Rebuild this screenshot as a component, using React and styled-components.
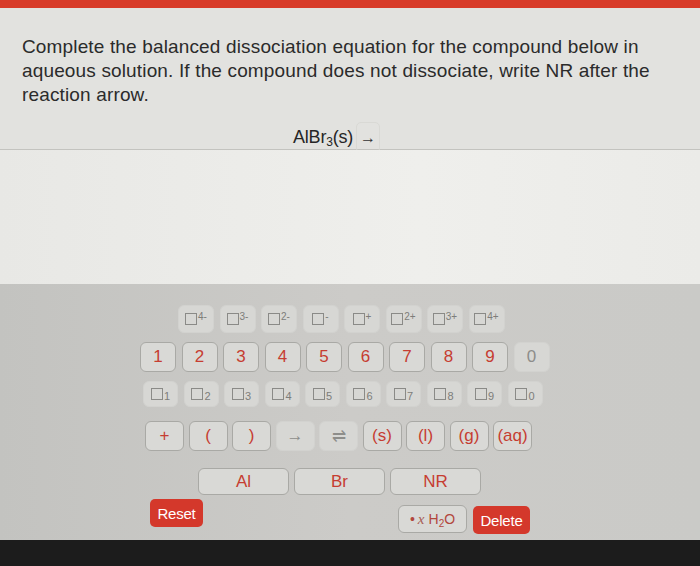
import React from 'react';
import styled, { createGlobalStyle, css } from 'styled-components';

const GlobalStyle = createGlobalStyle`
  html, body { margin: 0; padding: 0; background: #1b1b1b; }
  body { font-family: "Liberation Sans", Arial, sans-serif; }
`;

const red = '#c63d31';

const Page = styled.div`
  width: 700px;
  height: 566px;
  display: flex;
  flex-direction: column;
  overflow: hidden;
`;

const TopBar = styled.div`
  height: 8px;
  background: #d83b29;
`;

const Question = styled.div`
  background: #e2e2df;
  border-bottom: 1px solid #c3c3bf;
  padding: 27px 0 0 22px;
  box-sizing: border-box;
  height: 142px;
`;

const Prompt = styled.p`
  margin: 0;
  width: 660px;
  font-size: 19px;
  line-height: 24px;
  letter-spacing: 0.15px;
  color: #2b2b2b;
`;

const Equation = styled.div`
  margin-top: 15px;
  padding-left: 271px;
  display: flex;
  align-items: center;
  font-size: 18px;
  color: #262626;
`;

const Formula = styled.span`
  letter-spacing: -0.2px;
`;

const Sub = styled.sub`
  font-size: ${p => p.size || 12}px;
  vertical-align: -3px;
  line-height: 0;
`;

const ArrowBox = styled.span`
  margin-left: 3px;
  width: 22px;
  height: 29px;
  border: 1px solid #d9d9d5;
  border-radius: 5px;
  display: flex;
  align-items: center;
  justify-content: center;
  font-size: 16px;
  color: #333;
`;

const Answer = styled.div`
  height: 134px;
  background: linear-gradient(90deg, #e8e8e5, #efefec 60%, #ebebe8);
`;

const Keypad = styled.div`
  height: 256px;
  background: linear-gradient(90deg, #c3c3c0, #cccbc8 50%, #cacac7);
  padding-top: 21px;
  box-sizing: border-box;
  display: flex;
  flex-direction: column;
`;

const Row = styled.div`
  display: flex;
  align-items: ${p => p.align || 'center'};
  padding-left: ${p => p.left}px;
  margin-top: ${p => p.top || 0}px;
  gap: ${p => p.gap ?? 5.5}px;
`;

const Key = styled.button`
  flex: none;
  width: ${p => p.w || 36}px;
  height: ${p => p.h || 30}px;
  padding: 0;
  box-sizing: border-box;
  border-radius: 6px;
  font-family: "Liberation Sans", Arial, sans-serif;
  font-size: 17px;
  display: flex;
  align-items: center;
  justify-content: center;
  background: #d9d9d6;
  color: ${p => (p.muted ? '#8d8d8a' : red)};
  border: 1px solid ${p => (p.flat ? '#d2d2cf' : '#a9a9a5')};
  margin-top: ${p => p.down || 0}px;
  ${p => p.flat && css`
    background: #d7d7d4;
  `}
`;

const Slot = styled.span`
  width: 10px;
  height: 10px;
  border: 1px solid #8a8a87;
  display: inline-block;
`;

const Sup = styled.span`
  font-size: 10px;
  color: #7d7d7a;
  align-self: flex-start;
  margin-top: 5px;
  margin-left: 1px;
`;

const Low = styled.span`
  font-size: 11px;
  color: #7d7d7a;
  align-self: flex-end;
  margin-bottom: 4px;
  margin-left: 1px;
`;

const Spacer = styled.div`
  flex: none;
  width: ${p => p.w}px;
`;

const RedButton = styled.button`
  flex: none;
  width: ${p => p.w}px;
  height: 28px;
  padding: 0;
  border: none;
  border-radius: 5px;
  background: #d4382b;
  color: #fff;
  font-family: "Liberation Sans", Arial, sans-serif;
  font-size: 15px;
  letter-spacing: -0.2px;
  margin-top: ${p => p.down || 0}px;
`;

const WaterText = styled.span`
  font-size: 14px;
  color: #b2473d;
`;

const Italic = styled.span`
  font-family: "Liberation Serif", "Times New Roman", serif;
  font-style: italic;
  font-size: 15px;
  color: #a85d55;
  margin: 0 4px 0 3px;
`;

const Bottom = styled.div`
  flex: 1;
  background: #1c1c1c;
`;

const charges = ['4-', '3-', '2-', '-', '+', '2+', '3+', '4+'];
const digits = ['1', '2', '3', '4', '5', '6', '7', '8', '9', '0'];
const subs = ['1', '2', '3', '4', '5', '6', '7', '8', '9', '0'];

export default function App() {
  return (
    <Page>
      <GlobalStyle />
      <TopBar />
      <Question>
        <Prompt>
          Complete the balanced dissociation equation for the compound below in
          aqueous solution. If the compound does not dissociate, write NR after the
          reaction arrow.
        </Prompt>
        <Equation>
          <Formula>AlBr<Sub>3</Sub>(s)</Formula>
          <ArrowBox>→</ArrowBox>
        </Equation>
      </Question>
      <Answer />
      <Keypad>
        <Row left={178}>
          {charges.map(c => (
            <Key key={c} flat h={28}>
              <Slot />
              <Sup>{c}</Sup>
            </Key>
          ))}
        </Row>
        <Row left={140} top={9}>
          {digits.map(d => (
            <Key key={d} muted={d === '0'} flat={d === '0'}>{d}</Key>
          ))}
        </Row>
        <Row left={143} top={9}>
          {subs.map(s => (
            <Key key={s} flat h={26} w={35}>
              <Slot />
              <Low>{s}</Low>
            </Key>
          ))}
        </Row>
        <Row left={145} top={14} gap={4.5}>
          <Key w={39}>+</Key>
          <Key w={39}>(</Key>
          <Key w={39}>)</Key>
          <Key w={39} flat muted>→</Key>
          <Key w={39} flat muted>⇌</Key>
          <Key w={39}>(s)</Key>
          <Key w={39}>(l)</Key>
          <Key w={39}>(g)</Key>
          <Key w={39}>(aq)</Key>
        </Row>
        <Row left={198} top={17} gap={5}>
          <Key w={91} h={27}>Al</Key>
          <Key w={91} h={27}>Br</Key>
          <Key w={91} h={27}>NR</Key>
        </Row>
        <Row left={150} top={4} gap={0} align="flex-start">
          <RedButton w={53}>Reset</RedButton>
          <Spacer w={195} />
          <Key w={69} h={28} down={6}>
            <WaterText>•<Italic>x</Italic>H<Sub size={10}>2</Sub>O</WaterText>
          </Key>
          <Spacer w={6} />
          <RedButton w={57} down={7}>Delete</RedButton>
        </Row>
      </Keypad>
      <Bottom />
    </Page>
  );
}
